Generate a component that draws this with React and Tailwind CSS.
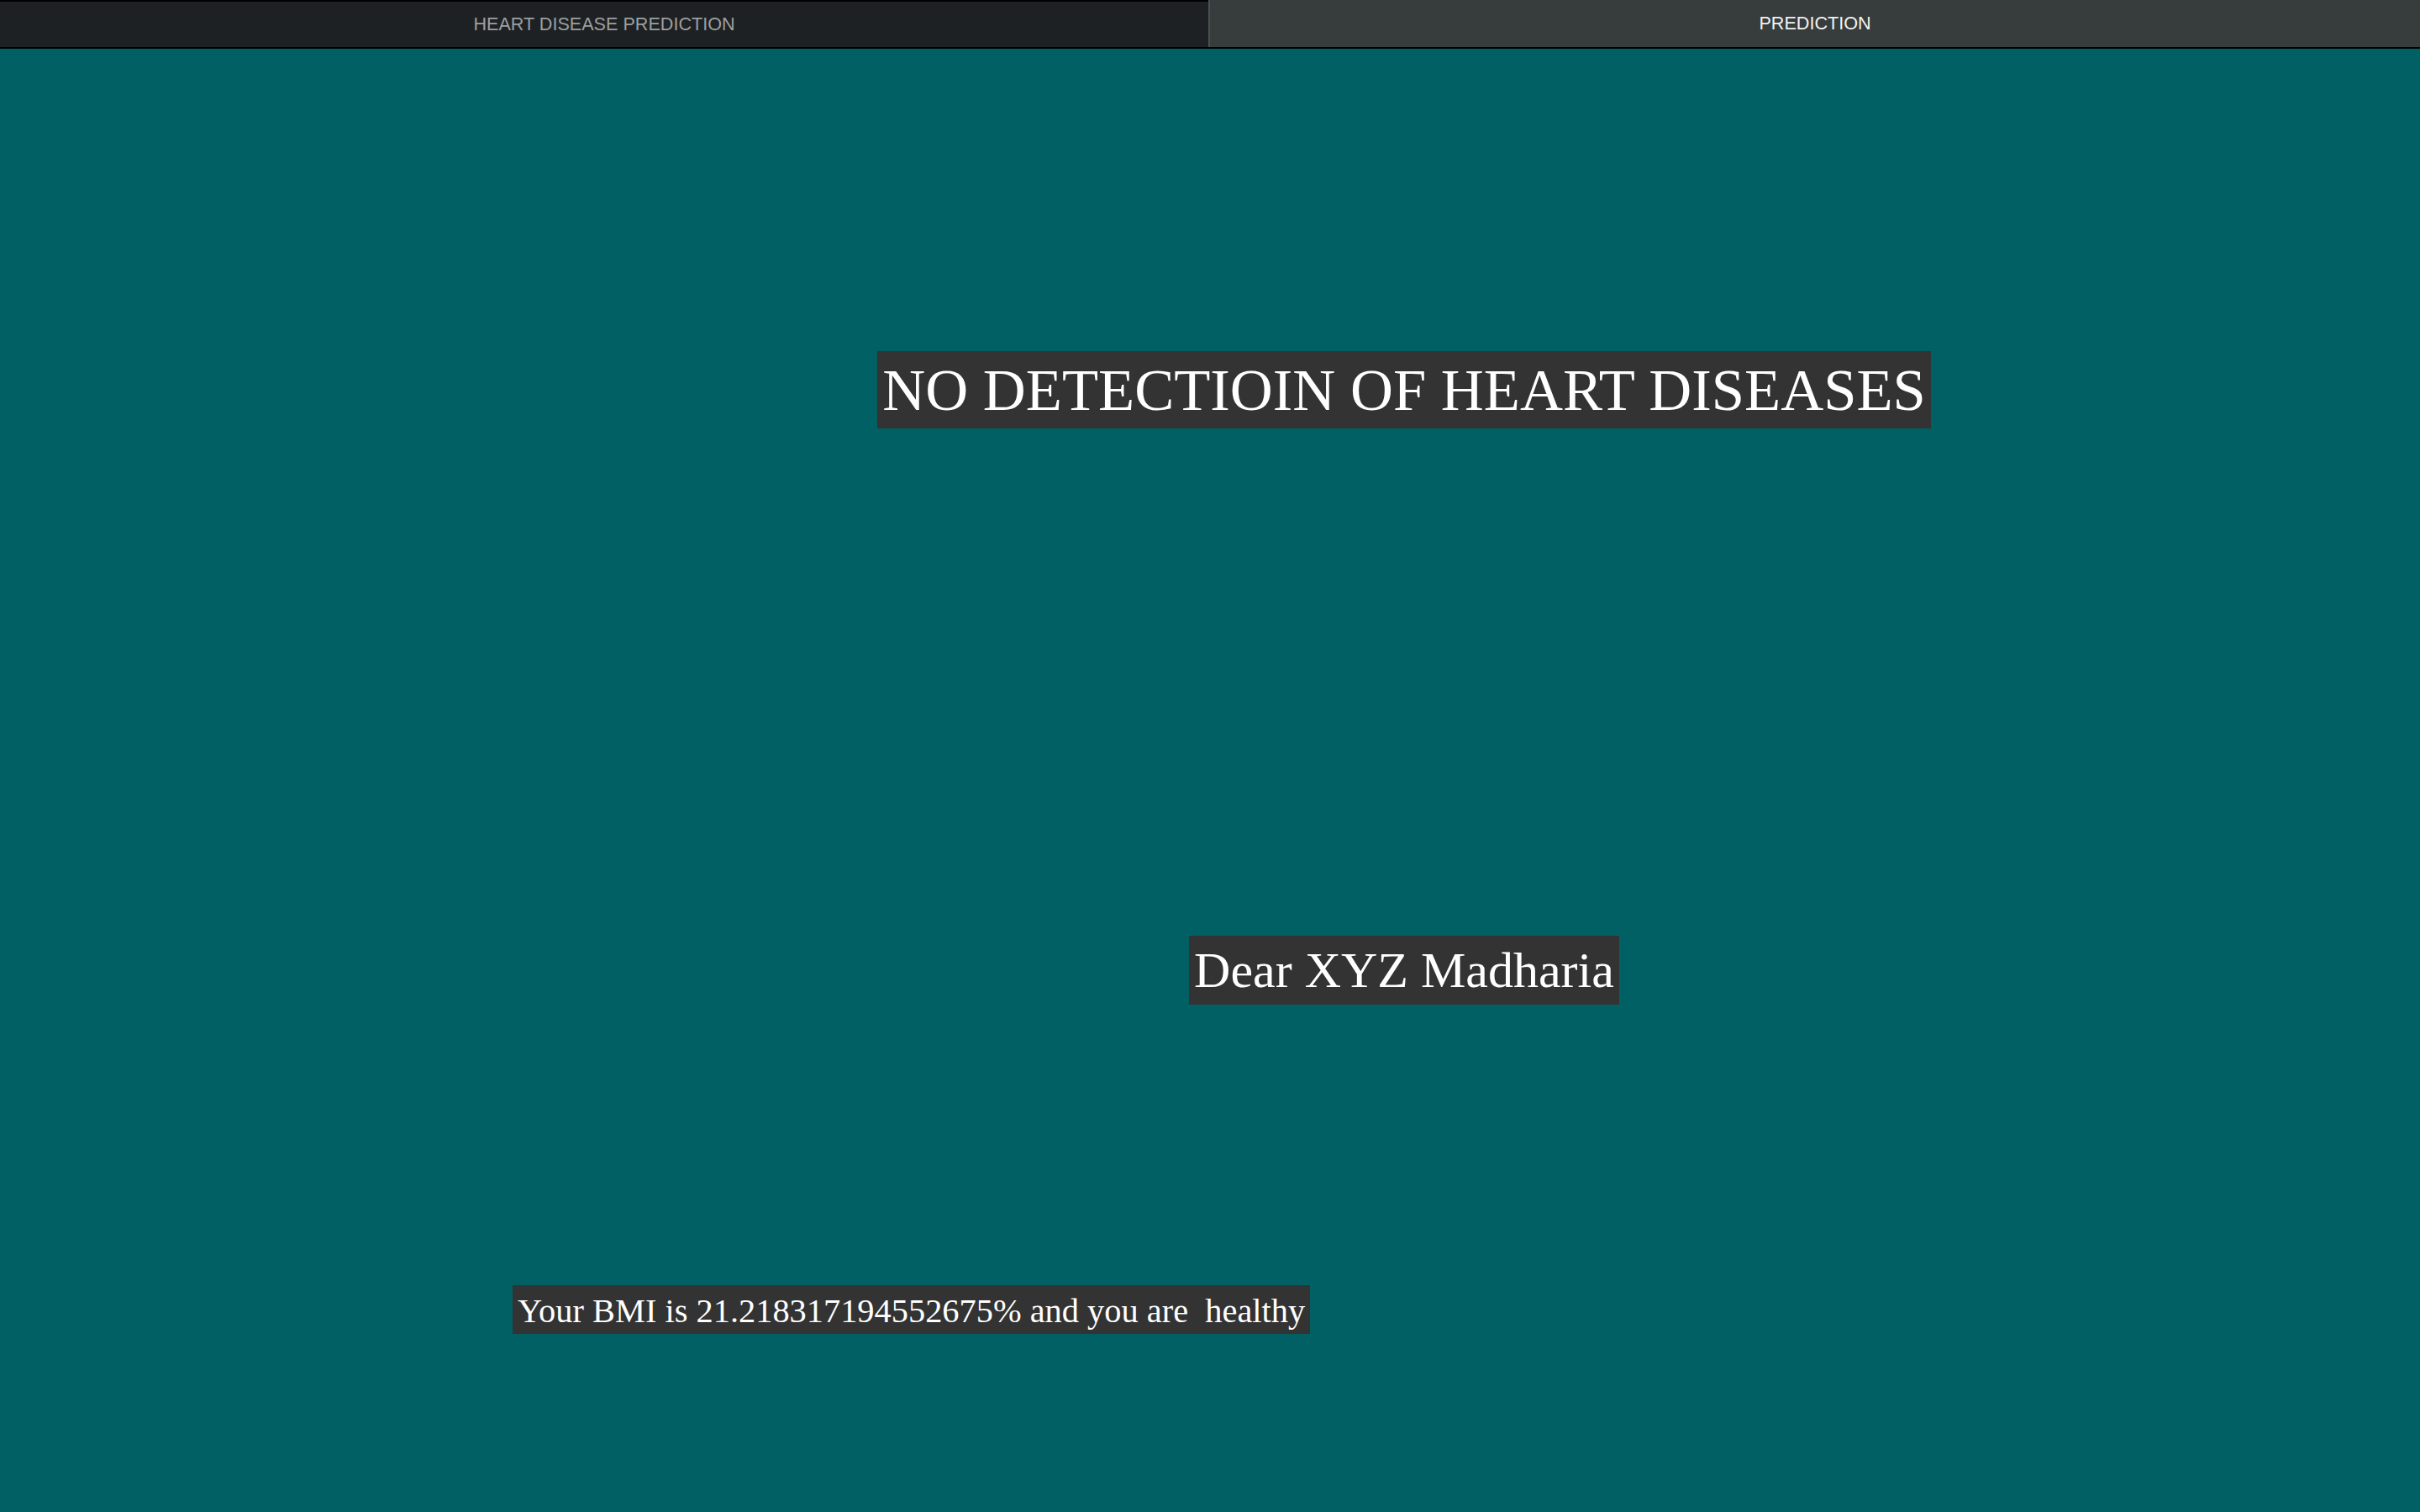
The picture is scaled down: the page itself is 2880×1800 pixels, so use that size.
import React from 'react'

const TabBar = () => {
  return (
    <div className="flex h-[58px] w-full border-b-2 border-black font-['Liberation_Sans',Arial,sans-serif] text-[21.6px]">
      <div className="flex w-[1438px] items-center justify-center border-t-2 border-black bg-[#1e2123] text-[#9c9fa0]">
        HEART DISEASE PREDICTION
      </div>
      <div className="w-[2px] bg-[#4a4f50]"></div>
      <div className="flex flex-1 items-center justify-center bg-[#373c3d] text-[#f2f2f2]">
        PREDICTION
      </div>
    </div>
  )
}

const App = () => {
  return (
    <div className="flex min-h-[1800px] w-full flex-col bg-[#006064]">
      <TabBar />
      <main className="flex flex-col font-['Liberation_Serif','Times_New_Roman',serif] text-white">
        <div className="flex justify-center pl-[462px] pt-[360px]">
          <span className="bg-[#333333] px-[6px] py-[6px] text-[70.6px] leading-[80px]">
            NO DETECTIOIN OF HEART DISEASES
          </span>
        </div>
        <div className="mt-[604px] flex justify-center pl-[462px]">
          <span className="bg-[#333333] px-[6px] py-[6px] text-[60px] leading-[70px]">
            Dear XYZ Madharia
          </span>
        </div>
        <div className="mt-[334px] flex pl-[610px]">
          <span className="whitespace-pre bg-[#333333] px-[6px] pb-[4px] pt-[8px] text-[40.4px] leading-[46px]">
            {'Your BMI is 21.218317194552675% and you are  healthy'}
          </span>
        </div>
      </main>
    </div>
  )
}

export default App
